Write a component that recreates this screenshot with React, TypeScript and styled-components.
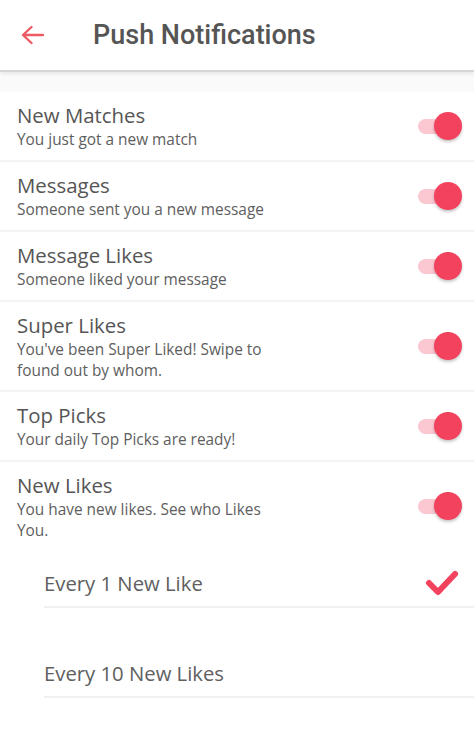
import React, { useState } from 'react';
import styled, { createGlobalStyle } from 'styled-components';

const GlobalStyle = createGlobalStyle`
  html, body {
    margin: 0;
    padding: 0;
    background: #ffffff;
  }
  body {
    font-family: 'Open Sans', 'Lato', sans-serif;
    -webkit-font-smoothing: antialiased;
  }
`;

const Page = styled.div`
  width: 474px;
  min-height: 735px;
  background: #ffffff;
  overflow: hidden;
`;

const Header = styled.header`
  height: 70px;
  display: flex;
  align-items: center;
  background: #ffffff;
  border-bottom: 2px solid #d6d6d6;
  box-shadow: 0 2px 4px rgba(0, 0, 0, 0.08);
  position: relative;
  z-index: 1;
`;

const BackButton = styled.button`
  width: 70px;
  height: 70px;
  padding: 0 0 0 21px;
  border: none;
  background: none;
  display: flex;
  align-items: center;
  cursor: pointer;
`;

const Title = styled.h1`
  margin: 0 0 0 23px;
  font-family: 'Roboto', sans-serif;
  font-weight: 500;
  font-size: 27px;
  color: #555555;
`;

const Band = styled.div`
  height: 20px;
  background: #fafafa;
`;

const Row = styled.div<{ $tall?: boolean; $last?: boolean }>`
  min-height: ${(p) => (p.$tall ? 90 : 70)}px;
  display: flex;
  align-items: center;
  justify-content: space-between;
  padding: 0 13px 0 17px;
  border-bottom: 2px solid ${(p) => (p.$last ? 'transparent' : '#f4f4f4')};
  box-sizing: border-box;
`;

const TextBlock = styled.div`
  display: flex;
  flex-direction: column;
  max-width: 266px;
`;

const RowTitle = styled.span`
  font-size: 20.4px;
  line-height: 27px;
  color: #555555;
`;

const RowSub = styled.span`
  font-size: 15.4px;
  line-height: 21px;
  color: #5e5e5e;
`;

const Track = styled.button<{ $on: boolean }>`
  position: relative;
  width: 40px;
  height: 15px;
  padding: 0;
  border: none;
  border-radius: 8px;
  background: ${(p) => (p.$on ? '#fbc7d1' : '#dddddd')};
  cursor: pointer;
  margin-right: 3px;
`;

const Knob = styled.span<{ $on: boolean }>`
  position: absolute;
  top: 50%;
  left: ${(p) => (p.$on ? '16px' : '-6px')};
  width: 28px;
  height: 28px;
  margin-top: -14px;
  border-radius: 50%;
  background: ${(p) => (p.$on ? '#f2425e' : '#f1f1f1')};
  box-shadow: 0 2px 3px rgba(0, 0, 0, 0.22);
`;

const OptionList = styled.div`
  padding-left: 44px;
  display: flex;
  flex-direction: column;
  gap: 34px;
`;

const Option = styled.div`
  display: flex;
  align-items: center;
  justify-content: space-between;
  padding: 17px 15px 9px 0;
  border-bottom: 2px solid #f1f1f1;
  cursor: pointer;
`;

const OptionLabel = styled.span`
  font-size: 20.3px;
  line-height: 28px;
  color: #606060;
`;

const Toggle: React.FC<{ on: boolean; onChange: () => void }> = ({ on, onChange }) => (
  <Track $on={on} onClick={onChange}>
    <Knob $on={on} />
  </Track>
);

const settings = [
  { title: 'New Matches', sub: 'You just got a new match' },
  { title: 'Messages', sub: 'Someone sent you a new message' },
  { title: 'Message Likes', sub: 'Someone liked your message' },
  { title: 'Super Likes', sub: "You've been Super Liked! Swipe to found out by whom.", tall: true },
  { title: 'Top Picks', sub: 'Your daily Top Picks are ready!' },
  { title: 'New Likes', sub: 'You have new likes. See who Likes You.', tall: true },
];

const options = ['Every 1 New Like', 'Every 10 New Likes'];

export default function App() {
  const [enabled, setEnabled] = useState(settings.map(() => true));
  const [picked, setPicked] = useState(0);

  return (
    <Page>
      <GlobalStyle />
      <Header>
        <BackButton aria-label="Back">
          <svg width="23" height="20" viewBox="0 0 23 20" fill="none">
            <path d="M22 10H2.5M10.5 2L2 10l8.5 8" stroke="#ee5a63" strokeWidth="2.4" strokeLinecap="round" strokeLinejoin="round" />
          </svg>
        </BackButton>
        <Title>Push Notifications</Title>
      </Header>
      <Band />
      {settings.map((s, i) => (
        <Row key={s.title} $tall={s.tall} $last={i === settings.length - 1}>
          <TextBlock>
            <RowTitle>{s.title}</RowTitle>
            <RowSub>{s.sub}</RowSub>
          </TextBlock>
          <Toggle
            on={enabled[i]}
            onChange={() => setEnabled(enabled.map((v, j) => (j === i ? !v : v)))}
          />
        </Row>
      ))}
      <OptionList>
        {options.map((o, i) => (
          <Option key={o} onClick={() => setPicked(i)}>
            <OptionLabel>{o}</OptionLabel>
            {picked === i && (
              <svg width="34" height="26" viewBox="0 0 34 26" fill="none">
                <path d="M4 13l9 9L30 4" stroke="#f2425e" strokeWidth="6" strokeLinecap="round" strokeLinejoin="round" />
              </svg>
            )}
          </Option>
        ))}
      </OptionList>
    </Page>
  );
}
